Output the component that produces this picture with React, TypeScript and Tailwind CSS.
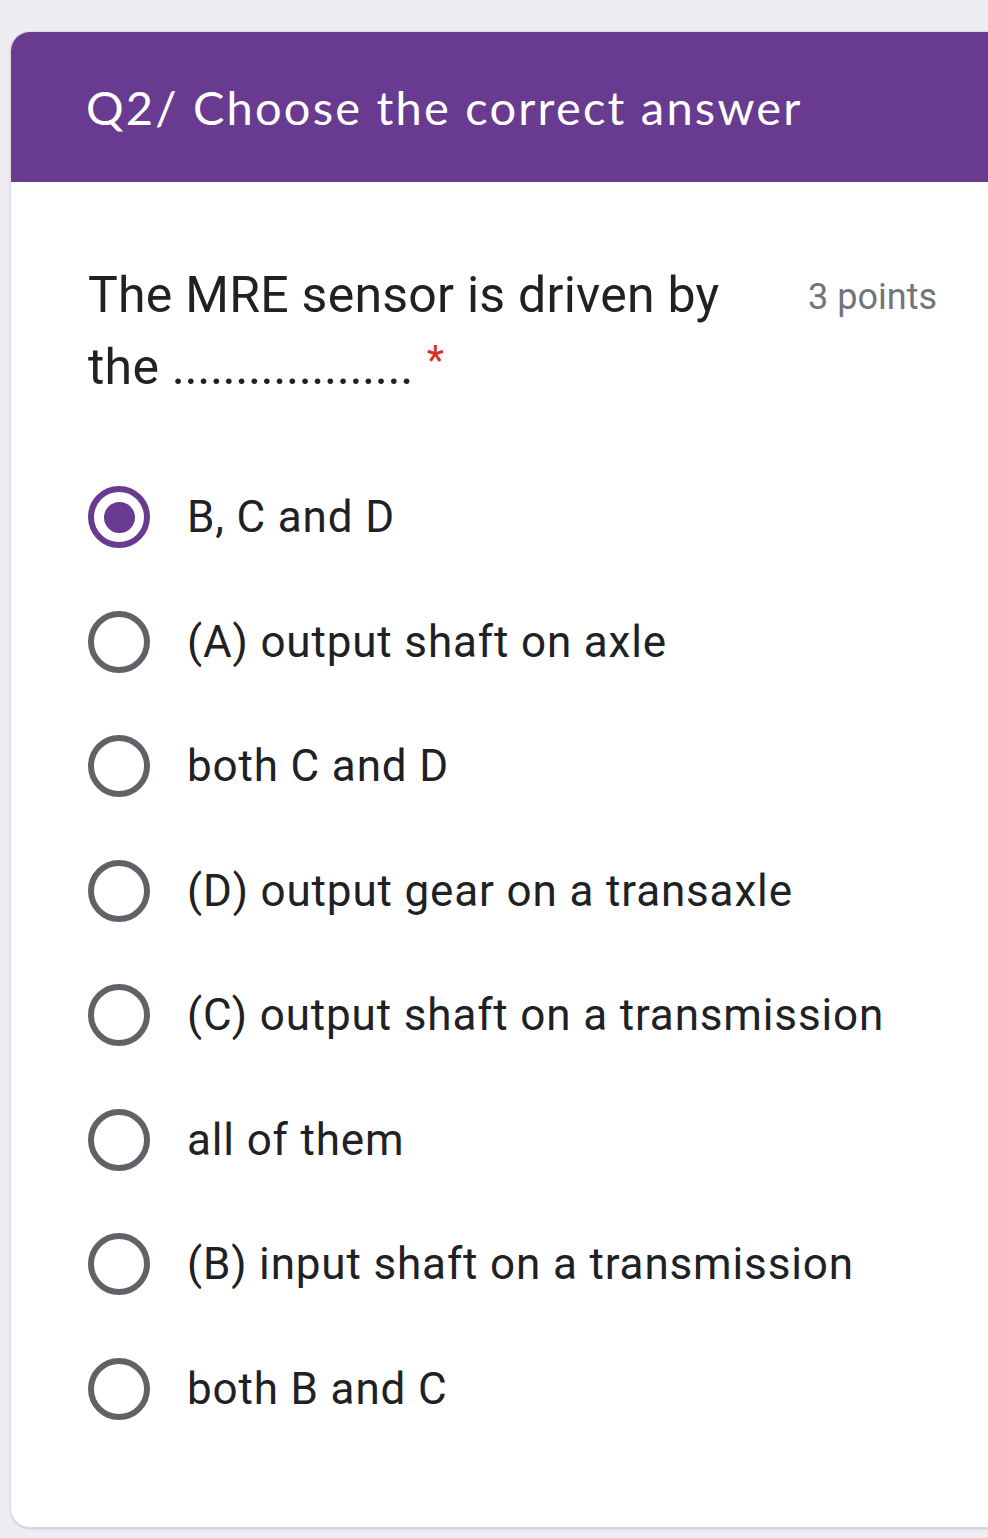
import React from "react";

const options: string[] = [
  "B, C and D",
  "(A) output shaft on axle",
  "both C and D",
  "(D) output gear on a transaxle",
  "(C) output shaft on a transmission",
  "all of them",
  "(B) input shaft on a transmission",
  "both B and C",
];

const selected = 0;

const Radio: React.FC<{ checked: boolean }> = ({ checked }) => (
  <div
    className={`flex h-[62px] w-[62px] shrink-0 items-center justify-center rounded-full border-[6px] ${
      checked ? "border-[#683b91]" : "border-[#5f6368]"
    }`}
  >
    {checked && <div className="h-[31px] w-[31px] rounded-full bg-[#683b91]" />}
  </div>
);

export default function App() {
  return (
    <div className="min-h-[1538px] w-[988px] overflow-hidden bg-[#efedf3] pt-[31px] font-['Roboto',sans-serif]">
      <div className="ml-[10px] w-[1010px] overflow-hidden rounded-[20px] border border-[#dadce0] bg-white shadow-[0_1px_2px_rgba(60,64,67,0.2)]">
        {/* header */}
        <div className="flex h-[150px] items-center bg-[#683b91] pl-[75px]">
          <h1 className="font-['Lato',sans-serif] text-[47px] leading-none tracking-[2.2px] text-white">
            Q2/ Choose the correct answer
          </h1>
        </div>

        <div className="pb-[76px] pl-[77px] pr-[82px] pt-[77px]">
          {/* question */}
          <div className="flex items-start justify-between">
            <p className="w-[680px] text-[50px] leading-[72px] tracking-[0.25px] text-[#202124]">
              The MRE sensor is driven by the{" "}
              <span className="tracking-[-0.5px]">...................</span>
              <span className="ml-[14px] inline-block pt-[10px] align-top text-[40px] leading-none text-[#d93025]">*</span>
            </p>
            <span className="pt-[6px] text-[36px] leading-[64px] text-[#70757a]">3 points</span>
          </div>

          {/* options */}
          <div className="mt-[52px]">
            {options.map((opt, i) => (
              <div key={i} className="flex h-[124.5px] items-center gap-[37px]">
                <Radio checked={i === selected} />
                <span className="text-[44px] leading-none tracking-[0.85px] text-[#202124]">{opt}</span>
              </div>
            ))}
          </div>
        </div>
      </div>
    </div>
  );
}
